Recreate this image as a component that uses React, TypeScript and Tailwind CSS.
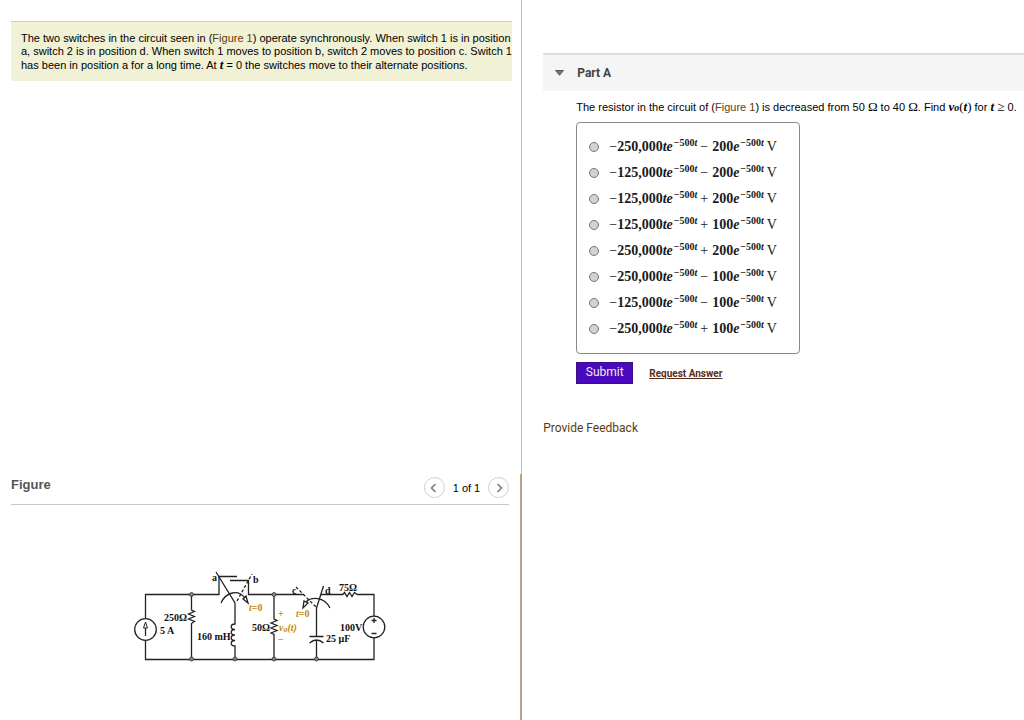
import { useState, type ReactNode } from "react";

type Option = { first: string; sign: string; second: string };

const options: Option[] = [
  { first: "250,000", sign: "−", second: "200" },
  { first: "125,000", sign: "−", second: "200" },
  { first: "125,000", sign: "+", second: "200" },
  { first: "125,000", sign: "+", second: "100" },
  { first: "250,000", sign: "+", second: "200" },
  { first: "250,000", sign: "−", second: "100" },
  { first: "125,000", sign: "−", second: "100" },
  { first: "250,000", sign: "+", second: "100" },
];

function Exponent() {
  return (
    <span className="mb-2 ml-px text-[10px] leading-none font-bold">
      −500<i>t</i>
    </span>
  );
}

function Formula({ first, sign, second }: Option) {
  return (
    <span className="flex items-center font-['Liberation_Serif',serif] text-sm leading-none whitespace-nowrap text-[#1a1a1a]">
      <span>
        −
        <b>
          {first}
          <i>te</i>
        </b>
      </span>
      <Exponent />
      <span className="ml-[3px]">{sign}</span>
      <span className="ml-1 font-bold">
        {second}
        <i>e</i>
      </span>
      <Exponent />
      <span className="ml-[3px]">V</span>
    </span>
  );
}

function MathText({ children }: { children: ReactNode }) {
  return <span className="font-['Liberation_Serif',serif] text-[13px] leading-none">{children}</span>;
}

function PagerButton({ label, path }: { label: string; path: string }) {
  return (
    <button
      type="button"
      aria-label={label}
      className="flex size-[21px] items-center justify-center rounded-full border border-[#cfcfcf] bg-white"
    >
      <svg viewBox="0 0 10 10" className="size-[10px]" fill="none" stroke="#808080" strokeWidth="1.7">
        <path d={path} />
      </svg>
    </button>
  );
}

function Circuit() {
  return (
    <svg
      viewBox="0 0 270 110"
      className="ml-[125px] block w-[270px]"
      role="img"
      aria-label="Circuit with two synchronous switches"
    >
      <g fill="none" stroke="#222" strokeWidth="1.3">
        <path d="M20.500 58V34.500H94V16.500H112M105 20.500H123.500V34.500H178M20.500 81V99.500H249V78M196 34.500H218M232 34.500H249V56" />
        <circle cx="20.500" cy="69.500" r="10.800" />
        <path d="M20.500 76V68" />
        <path d="M20.500 62l-2 6h4z" fill="#fff" strokeWidth="1" />
        <path d="M66.500 34.500V50l3 1.500-6 2.500 6 2.500-6 2.500 6 2.500-3 2V99" />
        <path d="M91 12L110 43V64c-5 0-5 5.500 0 5.500c-5 0-5 5.500 0 5.500c-5 0-5 5.500 0 5.500c-5 0-5 5.500 0 5.500V99" />
        <path d="M112 41L127 14" strokeDasharray="3 2" />
        <path d="M96 43C101 32 113 29 120 38" />
        <path d="M123 43l-5-4 3-3z" />
        <path d="M149 34.500V59l3 1.500-6 2.500 6 2.500-6 2.500 6 2.500-6 2.500 3 1.500V99" />
        <path d="M171 27L191 47" strokeDasharray="3 2" />
        <path d="M198.500 26L191.500 48V76M184.500 76.500H198.500M184.500 83Q191.500 77 198.500 83M191.500 80V99" />
        <path d="M181 42C186 37 199 36 205 48" />
        <path d="M178 48l1-7 4 2z" />
        <path d="M218 34.500l1.500-2 2.500 4 2.500-4 2.500 4 2.500-4 2.500 2" />
        <circle cx="249" cy="67" r="10.800" />
        <path d="M246.500 60.500h5M249 58v5M246.500 73.500h5" />
      </g>
      <g fill="#888" stroke="#333" strokeWidth=".8">
        <circle cx="66.500" cy="34.500" r="2" />
        <circle cx="149" cy="34.500" r="2" />
        <circle cx="66.500" cy="99" r="2" />
        <circle cx="110" cy="99" r="2" />
        <circle cx="149" cy="99" r="2" />
        <circle cx="191.500" cy="99" r="2" />
      </g>
      <g className="font-['Liberation_Serif',serif] text-[10px] font-bold" fill="#111">
        <text x="87" y="21">a</text>
        <text x="128" y="23">b</text>
        <text x="167" y="34">c</text>
        <text x="200" y="34">d</text>
        <text x="39" y="61">250Ω</text>
        <text x="35" y="74">5 A</text>
        <text x="72" y="80">160 mH</text>
        <text x="127" y="71">50Ω</text>
        <text x="214" y="31">75Ω</text>
        <text x="215" y="71">100V</text>
        <text x="201" y="82">25 μF</text>
      </g>
      <g className="font-['Liberation_Serif',serif] text-[10px] font-bold" fill="#bf8a10">
        <text x="124" y="51"><tspan fontStyle="italic">t</tspan>=0</text>
        <text x="171" y="57"><tspan fontStyle="italic">t</tspan>=0</text>
        <text x="153" y="57">+</text>
        <text x="154" y="71" fontStyle="italic">v<tspan fontSize="8" dy="1">o</tspan><tspan dy="-1">(t)</tspan></text>
        <text x="153" y="83">−</text>
      </g>
    </svg>
  );
}

export default function App() {
  const [selected, setSelected] = useState<number | null>(null);

  return (
    <main className="grid min-h-screen grid-cols-[minmax(0,51fr)_minmax(0,49fr)] bg-white font-['Liberation_Sans',Arial,sans-serif] text-[11px] text-black">
      <div className="grid grid-cols-1 grid-rows-[474fr_246fr]">
        <section className="border-r border-[#c9b8a4] pt-[21px] pr-[9px] pl-[11px]">
          <div className="border-t border-[#cfcfb8] bg-[#f0f1d5] pt-[10px] pb-[9px] pl-[10px] leading-[13px]">
            <p className="whitespace-nowrap">
              The two switches in the circuit seen in (<a href="#figure" className="text-[#5e3c0c]">Figure 1</a>) operate
              synchronously. When switch 1 is in position
              <br />
              a, switch 2 is in position d. When switch 1 moves to position b, switch 2 moves to position c. Switch 1
              <br />
              has been in position a for a long time. At{" "}
              <i className="font-['Liberation_Serif',serif] text-[13px] leading-none font-bold">t</i> = 0 the switches
              move to their alternate positions.
            </p>
          </div>
        </section>
        <section id="figure" className="border-r-2 border-[#c0a080] pl-[11px]">
          <header className="mr-[11px] flex h-[31px] items-center justify-between border-b border-[#c8c8c8]">
            <h2 className="pb-2 text-[13px] font-bold text-[#555]">Figure</h2>
            <div className="flex items-center gap-2 pb-[3px]">
              <PagerButton label="Previous figure" path="M6.500 1L2.500 5L6.500 9" />
              <span className="pt-[2px]">1 of 1</span>
              <PagerButton label="Next figure" path="M3.500 1L7.500 5L3.500 9" />
            </div>
          </header>
          <div className="-ml-[11px] pt-[55px]">
            <Circuit />
          </div>
        </section>
      </div>

      <section className="pt-[53px] pl-[21px]">
        <header className="flex h-[38px] items-center border-t-2 border-[#dedede] bg-[#f5f5f5] pl-3">
          <svg viewBox="0 0 9 6" className="h-[6px] w-[9px]" fill="#777" stroke="#444" strokeWidth=".8">
            <path d="M.5 .5h8L4.500 5.300z" />
          </svg>
          <h2 className="ml-[13px] font-['Roboto',sans-serif] text-xs font-bold text-[#444]">Part A</h2>
        </header>
        <div className="pl-[33px]">
          <p className="pt-2 leading-4 whitespace-nowrap">
            The resistor in the circuit of (<a href="#figure" className="text-[#5e3c0c]">Figure 1</a>) is decreased from 50{" "}
            <MathText>Ω</MathText> to 40 <MathText>Ω</MathText>. Find{" "}
            <MathText>
              <i className="font-bold">
                v<span className="text-[10px]">o</span>
              </i>
              (<i className="font-bold">t</i>)
            </MathText>{" "}
            for <MathText><i className="font-bold">t</i> ≥</MathText> 0.
          </p>
          <form onSubmit={(event) => event.preventDefault()}>
            <fieldset
              aria-label="Output voltage"
              className="mt-[7px] w-[224px] rounded-[4px] border border-[#888] pt-[11px] pb-[11px] pl-3"
            >
              {options.map((option, index) => (
                <label key={index} className="flex h-[26px] items-center gap-[10px]">
                  <input
                    type="radio"
                    name="answer"
                    checked={selected === index}
                    onChange={() => setSelected(index)}
                    className="size-[10px] appearance-none rounded-full border border-[#777] bg-[#d2d2d2] checked:bg-[#444]"
                  />
                  <Formula {...option} />
                </label>
              ))}
            </fieldset>
            <div className="mt-2 flex items-center gap-4">
              <button
                type="submit"
                className="h-[22px] w-[57px] border border-[#3c1080] bg-[#4a08bf] pb-[2px] font-['Roboto',sans-serif] text-xs text-[#f4ecd8]"
              >
                Submit
              </button>
              <a href="#answer" className="font-['Roboto',sans-serif] text-[10px] font-bold text-[#5a2c18] underline">
                Request Answer
              </a>
            </div>
          </form>
        </div>
        <a
          href="#feedback"
          className="mt-9 inline-block font-['Roboto',sans-serif] text-xs leading-4 text-[#5a3c14]"
        >
          Provide Feedback
        </a>
      </section>
    </main>
  );
}
